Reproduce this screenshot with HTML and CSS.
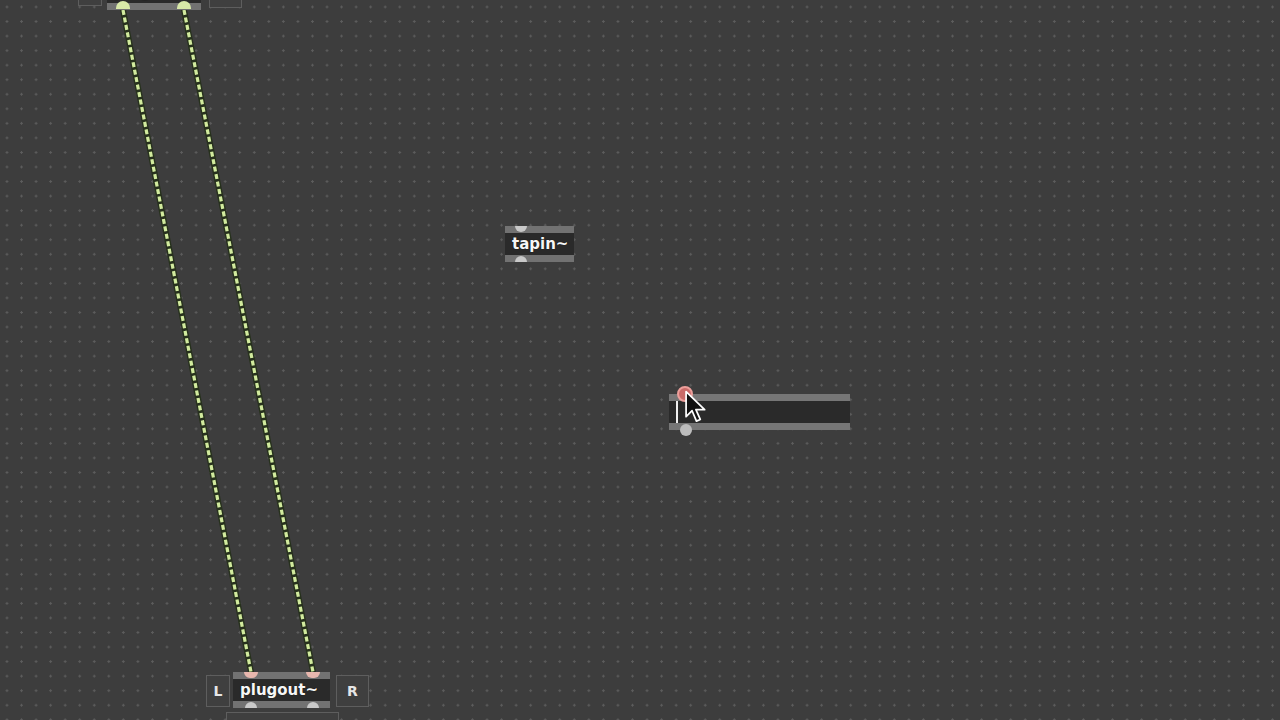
FILE: index.html
```html
<!DOCTYPE html>
<html>
<head>
<meta charset="utf-8">
<link rel="stylesheet" href="styles.css">
</head>
<body>
<div class="patcher">
  <svg class="cables" width="1280" height="720" viewBox="0 0 1280 720">
    <g class="cable">
      <line class="under" x1="123" y1="10" x2="251" y2="672"/>
      <line class="over" x1="123" y1="10" x2="251" y2="672"/>
      <line class="under" x1="184" y1="10" x2="313" y2="672"/>
      <line class="over" x1="184" y1="10" x2="313" y2="672"/>
    </g>
  </svg>

  <!-- top plugin~ object (cut off) -->
  <div class="side top-l"></div>
  <div class="side top-r"></div>
  <div class="obj top-obj">
    <div class="body"><span class="label">plugin~</span></div>
    <div class="strip bottom">
      <span class="port out lit" style="left:16px"></span>
      <span class="port out lit" style="left:77px"></span>
    </div>
  </div>

  <!-- tapin~ -->
  <div class="obj tapin">
    <div class="strip top"><span class="port in" style="left:16px"></span></div>
    <div class="body"><span class="label">tapin~</span></div>
    <div class="strip bottom"><span class="port out" style="left:16px"></span></div>
  </div>

  <!-- new empty object -->
  <div class="obj empty">
    <div class="strip top"></div>
    <div class="body"><span class="caret"></span></div>
    <div class="strip bottom"></div>
    <span class="inlet-hover"></span>
    <span class="outlet-dot"></span>
  </div>
  <svg class="pointer" width="24" height="36" viewBox="0 0 22 32">
    <path d="M1 1 L1 24 L6.5 18.5 L10.5 28 L14 26.5 L10 17.5 L18 17.5 Z" fill="#111" stroke="#fff" stroke-width="1.6" stroke-linejoin="round"/>
  </svg>

  <!-- plugout~ -->
  <div class="side bl">L</div>
  <div class="side br">R</div>
  <div class="obj plugout">
    <div class="strip top">
      <span class="port in hot" style="left:18px"></span>
      <span class="port in hot" style="left:80px"></span>
    </div>
    <div class="body"><span class="label">plugout~</span></div>
    <div class="strip bottom">
      <span class="port out" style="left:18px"></span>
      <span class="port out" style="left:80px"></span>
    </div>
  </div>
  <div class="side below"></div>
</div>
</body>
</html>
```

FILE: styles.css
```css
html, body {
  margin: 0;
  padding: 0;
  width: 1280px;
  height: 720px;
  overflow: hidden;
  background: #3d3d3d;
  font-family: "DejaVu Sans", "Liberation Sans", Arial, sans-serif;
}

.patcher {
  position: relative;
  width: 1280px;
  height: 720px;
  background-color: #3d3d3d;
  background-image: radial-gradient(circle, #5c5c5c 1px, transparent 1.4px);
  background-size: 14.55px 14.55px;
  background-position: -0.3px -0.3px;
  overflow: hidden;
}

.cables {
  position: absolute;
  left: 0;
  top: 0;
}

.cable .under {
  stroke: #27311d;
  stroke-width: 6;
  stroke-linecap: round;
}

.cable .over {
  stroke: #d2eb9e;
  stroke-width: 3.2;
  stroke-dasharray: 5 2.6;
}

.obj {
  position: absolute;
  display: flex;
  flex-direction: column;
}

.strip {
  position: relative;
  height: 7px;
  background: #727272;
}

.body {
  height: 22px;
  background: #2a2a2a;
  display: flex;
  align-items: center;
  padding-left: 7px;
  position: relative;
}

.label {
  color: #f6f6f6;
  font-weight: bold;
  font-size: 15px;
  text-shadow: 0 0 1px #000;
}

.port {
  position: absolute;
  width: 12px;
  height: 6px;
  margin-left: -6px;
}

.port.in {
  top: 0;
  border-radius: 0 0 6px 6px;
  background: #c9c9c9;
}

.port.out {
  bottom: 0;
  border-radius: 6px 6px 0 0;
  background: #c9c9c9;
}

.port.out.lit {
  background: #d8e8a8;
  bottom: 1px;
  height: 8px;
  width: 14px;
  margin-left: -7px;
  border-radius: 7px 7px 0 0;
}

.port.in.hot {
  background: #e8b7ae;
  width: 14px;
  margin-left: -7px;
}

.top-obj {
  left: 107px;
  top: -19px;
  width: 94px;
}

.top-obj .body {
  overflow: hidden;
}

.tapin {
  left: 505px;
  top: 226px;
  width: 69px;
}

.empty {
  left: 669px;
  top: 394px;
  width: 181px;
}

.empty .strip {
  background: #767676;
}

.caret {
  position: absolute;
  left: 7px;
  top: 0;
  width: 2px;
  height: 23px;
  background: #f0f0f0;
}

.inlet-hover {
  position: absolute;
  left: 8px;
  top: -8px;
  width: 12px;
  height: 12px;
  border-radius: 50%;
  background: #c96a68;
  border: 2px solid #ec9f9b;
}

.outlet-dot {
  position: absolute;
  left: 11px;
  top: 30px;
  width: 12px;
  height: 12px;
  border-radius: 50%;
  background: #bdbdbd;
}

.pointer {
  position: absolute;
  left: 685px;
  top: 390px;
}

.plugout {
  left: 233px;
  top: 672px;
  width: 97px;
}

.side {
  position: absolute;
  border: 1px solid #5e5e5e;
  background: #3f3f3f;
  color: #e6e6e6;
  font-weight: bold;
  font-size: 14px;
  display: flex;
  align-items: center;
  justify-content: center;
  box-sizing: border-box;
}

.side.bl {
  left: 206px;
  top: 675px;
  width: 24px;
  height: 32px;
}

.side.br {
  left: 336px;
  top: 675px;
  width: 33px;
  height: 32px;
}

.side.below {
  left: 226px;
  top: 712px;
  width: 113px;
  height: 20px;
}

.side.top-l {
  left: 78px;
  top: -26px;
  width: 24px;
  height: 32px;
}

.side.top-r {
  left: 209px;
  top: -24px;
  width: 33px;
  height: 32px;
}
```
